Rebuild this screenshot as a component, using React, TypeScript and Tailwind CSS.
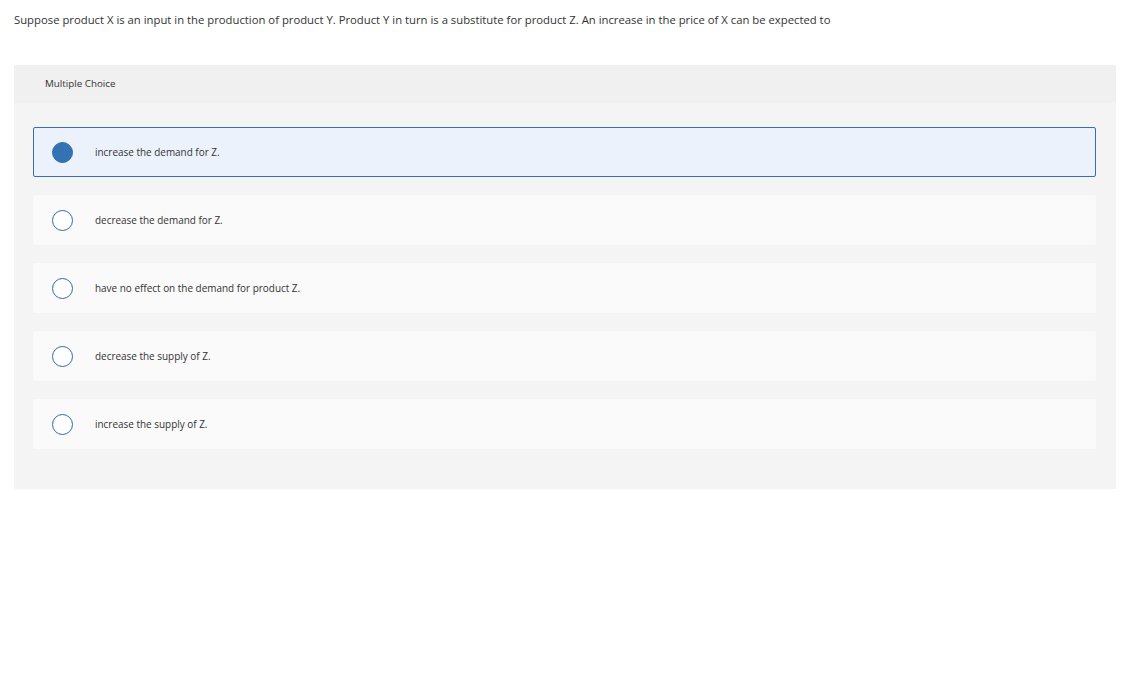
import React, { useState } from 'react';

const choices = [
  'increase the demand for Z.',
  'decrease the demand for Z.',
  'have no effect on the demand for product Z.',
  'decrease the supply of Z.',
  'increase the supply of Z.',
];

export default function App() {
  const [picked, setPicked] = useState(0);

  return (
    <div className="min-h-screen bg-white text-[#333]" style={{ fontFamily: '"Open Sans", Lato, sans-serif' }}>
      <p className="pl-[14px] pt-[13px] text-[11.3px] leading-[14px]">
        Suppose product X is an input in the production of product Y. Product Y in turn is a substitute for product Z. An
        increase in the price of X can be expected to
      </p>

      <div className="mx-[14px] mt-[38px] w-[1102px] rounded-[2px] bg-[#f4f4f4]">
        <div className="flex h-[38px] items-center rounded-t-[2px] bg-[#f0f0f0] pl-[31px] text-[9.8px]">Multiple Choice</div>

        <div className="flex flex-col gap-[18px] px-[19px] pt-[24px] pb-[40px]">
          {choices.map((c, i) => {
            const on = picked === i;
            return (
              <button
                key={c}
                onClick={() => setPicked(i)}
                className={`flex h-[50px] w-[1063px] items-center rounded-[2px] text-left ${
                  on ? 'border border-[#3670b3] bg-[#ebf2fb]' : 'border border-transparent bg-[#fafafa]'
                }`}
              >
                <span
                  className={`ml-[18px] h-[21px] w-[21px] shrink-0 rounded-full border-[1.5px] border-[#2f6aa8] ${
                    on ? 'bg-[#3373b5]' : 'bg-white'
                  }`}
                />
                <span className="ml-[22px] text-[9.95px]">{c}</span>
              </button>
            );
          })}
        </div>
      </div>
    </div>
  );
}
